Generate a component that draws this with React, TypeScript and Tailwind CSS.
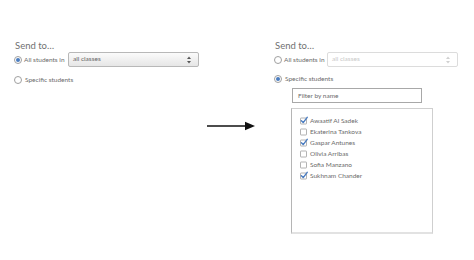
import React from 'react';

const students = [
  { name: 'Awaatif Al Sadek', checked: true },
  { name: 'Ekaterina Tankova', checked: false },
  { name: 'Gaspar Antunes', checked: true },
  { name: 'Olivia Arribas', checked: false },
  { name: 'Sofia Manzano', checked: false },
  { name: 'Sukhnam Chander', checked: true },
];

const Radio = ({ on }: { on?: boolean }) => (
  <span className="w-[8px] h-[8px] rounded-full border border-[#a0a0a0] bg-white flex items-center justify-center shrink-0">
    {on && <span className="w-[4px] h-[4px] rounded-full bg-[#4a7cc0]" />}
  </span>
);

const Box = ({ on }: { on: boolean }) => (
  <svg width="9" height="9" viewBox="0 0 9 9" className="shrink-0">
    <rect x="1.5" y="2" width="6" height="6" rx="0.5" fill="white" stroke="#a0a0a0" strokeWidth="0.8" />
    {on && <path d="M2.4 4.8 L4.2 6.6 L8.2 1.3" fill="none" stroke="#4a7cc0" strokeWidth="1.4" strokeLinecap="round" strokeLinejoin="round" />}
  </svg>
);

const Chevrons = ({ color }: { color: string }) => (
  <svg width="4" height="8" viewBox="0 0 4 8">
    <path d="M0 3 L2 0.5 L4 3 Z" fill={color} />
    <path d="M0 5 L2 7.5 L4 5 Z" fill={color} />
  </svg>
);

const Select = ({ disabled }: { disabled?: boolean }) => (
  <div
    className={`ml-auto w-[131px] h-[15px] rounded-[2px] border flex items-center justify-between pl-[4px] pr-[7px] ${
      disabled ? 'border-[#dcdcdc] bg-white text-[#c8c8c8]' : 'border-[#b8b8b8] bg-gradient-to-b from-[#fbfbfb] to-[#e6e6e6] text-[#666]'
    }`}
  >
    <span className="text-[6.5px] leading-none">all classes</span>
    <Chevrons color={disabled ? '#d0d0d0' : '#555'} />
  </div>
);

export default function App() {
  return (
    <div className="w-[474px] h-[260px] bg-white flex pt-[40px] text-[#6b6b6b]" style={{ fontFamily: 'Lato, "Open Sans", sans-serif' }}>
      <div className="ml-[14px] w-[185px]">
        <div className="pl-[1px] text-[9.5px] leading-[12px] text-[#707070]">Send to…</div>
        <div className="flex items-center h-[15px]">
          <Radio on />
          <span className="ml-[2px] text-[6.5px]">All students in</span>
          <Select />
        </div>
        <div className="flex items-center h-[14px] mt-[6px]">
          <Radio />
          <span className="ml-[3px] text-[6.5px]">Specific students</span>
        </div>
      </div>

      <div className="ml-[8px] mt-[81px] w-[48px]">
        <svg width="48" height="10" viewBox="0 0 48 10">
          <line x1="0" y1="5" x2="40" y2="5" stroke="#111" strokeWidth="1.6" />
          <path d="M38 0.8 L48 5 L38 9.2 Z" fill="#111" />
        </svg>
      </div>

      <div className="ml-[19px] w-[184px]">
        <div className="pl-[1px] text-[9.5px] leading-[12px] text-[#707070]">Send to…</div>
        <div className="flex items-center h-[15px]">
          <Radio />
          <span className="ml-[2px] text-[6.5px]">All students in</span>
          <Select disabled />
        </div>
        <div className="flex items-center h-[14px] mt-[5px]">
          <Radio on />
          <span className="ml-[3px] text-[6.5px]">Specific students</span>
        </div>
        <div className="ml-[18px] mt-[2px] w-[130px] h-[15px] border border-[#a8a8a8] bg-white flex items-center px-[5px]">
          <span className="text-[6.5px] text-[#6b6b6b]">Filter by name</span>
        </div>
        <div className="ml-[17px] mt-[5px] w-[142px] h-[126px] border border-[#cfcfcf] border-l-[#b5b5b5] border-b-2 border-b-[#e2e2e2] pt-[6px] pl-[7px]">
          {students.map((s) => (
            <div key={s.name} className="flex items-center h-[11px]">
              <Box on={s.checked} />
              <span className="ml-[2px] text-[6.5px] text-[#6b6b6b]">{s.name}</span>
            </div>
          ))}
        </div>
      </div>
    </div>
  );
}
